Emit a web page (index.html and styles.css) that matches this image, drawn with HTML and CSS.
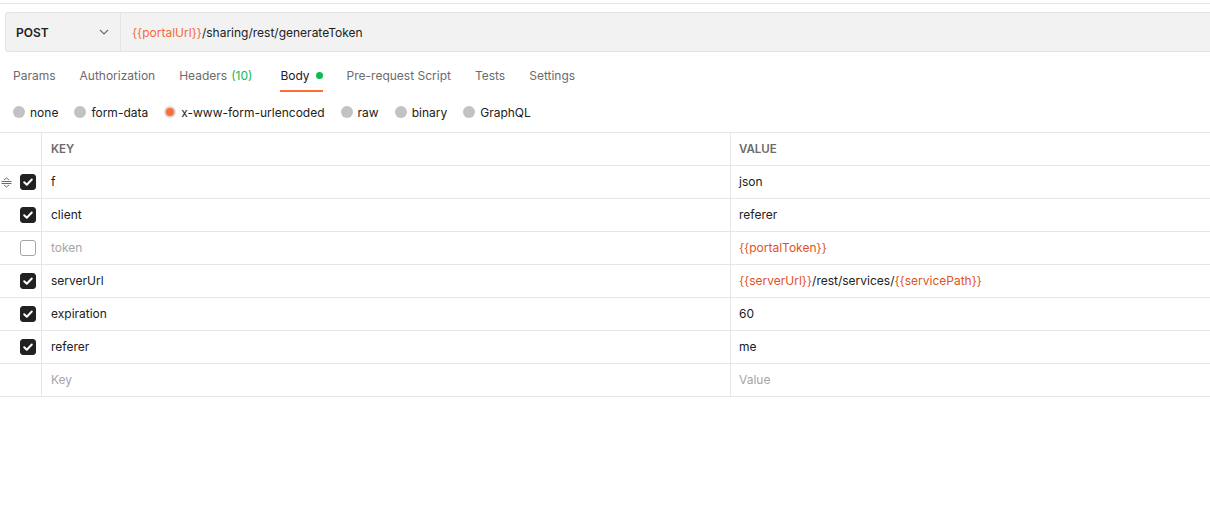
FILE: index.html
```html
<!DOCTYPE html>
<html>
<head>
<meta charset="utf-8">
<link rel="stylesheet" href="styles.css">
</head>
<body>
<div class="topline"></div>
<div class="urlbar">
  <div class="method">
    <span class="method-name">POST</span>
    <svg class="chev" width="10" height="6" viewBox="0 0 10 6"><path d="M1 1l4 4 4-4" fill="none" stroke="#6b6b6b" stroke-width="1.1"/></svg>
  </div>
  <div class="url"><span class="var-light">{{portalUrl}}</span>/sharing/rest/generateToken</div>
</div>
<div class="tabs">
  <div class="tab">Params</div>
  <div class="tab">Authorization</div>
  <div class="tab">Headers <span class="count">(10)</span></div>
  <div class="tab active">Body <span class="dot"></span></div>
  <div class="tab">Pre-request Script</div>
  <div class="tab">Tests</div>
  <div class="tab">Settings</div>
</div>
<div class="radios">
  <div class="radio"><span class="circle"></span>none</div>
  <div class="radio"><span class="circle"></span>form-data</div>
  <div class="radio"><span class="circle on"></span>x-www-form-urlencoded</div>
  <div class="radio"><span class="circle"></span>raw</div>
  <div class="radio"><span class="circle"></span>binary</div>
  <div class="radio"><span class="circle"></span>GraphQL</div>
</div>
<div class="table">
  <div class="row head">
    <div class="cell c0"></div>
    <div class="cell c1">KEY</div>
    <div class="cell c2">VALUE</div>
  </div>
  <div class="row">
    <div class="cell c0">
      <svg class="drag" width="11" height="11" viewBox="0 0 11 11"><path d="M3 3l2.5-2 2.5 2M0.5 4.5h10M0.5 6.5h10M3 8l2.5 2 2.5-2" fill="none" stroke="#6b6b6b" stroke-width="1"/></svg>
      <span class="cb checked"><svg width="16" height="16" viewBox="0 0 16 16"><path d="M4.2 8.2l2.6 2.5 5-5.2" fill="none" stroke="#fff" stroke-width="2" stroke-linecap="round" stroke-linejoin="round"/></svg></span>
    </div>
    <div class="cell c1">f</div>
    <div class="cell c2">json</div>
  </div>
  <div class="row">
    <div class="cell c0"><span class="cb checked"><svg width="16" height="16" viewBox="0 0 16 16"><path d="M4.2 8.2l2.6 2.5 5-5.2" fill="none" stroke="#fff" stroke-width="2" stroke-linecap="round" stroke-linejoin="round"/></svg></span></div>
    <div class="cell c1">client</div>
    <div class="cell c2">referer</div>
  </div>
  <div class="row">
    <div class="cell c0"><span class="cb"></span></div>
    <div class="cell c1 muted">token</div>
    <div class="cell c2"><span class="var">{{portalToken}}</span></div>
  </div>
  <div class="row">
    <div class="cell c0"><span class="cb checked"><svg width="16" height="16" viewBox="0 0 16 16"><path d="M4.2 8.2l2.6 2.5 5-5.2" fill="none" stroke="#fff" stroke-width="2" stroke-linecap="round" stroke-linejoin="round"/></svg></span></div>
    <div class="cell c1">serverUrl</div>
    <div class="cell c2"><span class="var">{{serverUrl}}</span>/rest/services/<span class="var">{{servicePath}}</span></div>
  </div>
  <div class="row">
    <div class="cell c0"><span class="cb checked"><svg width="16" height="16" viewBox="0 0 16 16"><path d="M4.2 8.2l2.6 2.5 5-5.2" fill="none" stroke="#fff" stroke-width="2" stroke-linecap="round" stroke-linejoin="round"/></svg></span></div>
    <div class="cell c1">expiration</div>
    <div class="cell c2">60</div>
  </div>
  <div class="row">
    <div class="cell c0"><span class="cb checked"><svg width="16" height="16" viewBox="0 0 16 16"><path d="M4.2 8.2l2.6 2.5 5-5.2" fill="none" stroke="#fff" stroke-width="2" stroke-linecap="round" stroke-linejoin="round"/></svg></span></div>
    <div class="cell c1">referer</div>
    <div class="cell c2">me</div>
  </div>
  <div class="row">
    <div class="cell c0"></div>
    <div class="cell c1 placeholder">Key</div>
    <div class="cell c2 placeholder">Value</div>
  </div>
</div>
</body>
</html>
```

FILE: styles.css
```css
* { box-sizing: border-box; }
body {
  margin: 0;
  background: #fff;
  font-family: Inter, "Noto Sans", sans-serif;
  font-size: 12px;
  color: #212121;
}
.topline {
  height: 4px;
  border-bottom: 1px solid #e6e6e6;
}
.urlbar {
  display: flex;
  margin: 8px 0 0 5px;
  height: 40px;
  background: #f2f2f2;
  border: 1px solid #e3e3e3;
  border-right: none;
  border-radius: 4px 0 0 4px;
}
.method {
  width: 115px;
  display: flex;
  align-items: center;
  justify-content: space-between;
  padding: 0 11px 0 10px;
  border-right: 1px solid #e3e3e3;
}
.method-name {
  font-weight: 600;
  color: #212121;
}
.url {
  display: flex;
  align-items: center;
  padding-left: 11px;
  color: #212121;
}
.var-light { color: #f26b3a; }
.var { color: #e0531f; }
.tabs {
  display: flex;
  gap: 24px;
  padding: 0 0 0 13px;
  margin-top: 8px;
  height: 32px;
}
.tab {
  display: flex;
  align-items: center;
  color: #6b6b6b;
  height: 32px;
  border-bottom: 2px solid transparent;
}
.tab.active {
  color: #212121;
  border-bottom-color: #ff6c37;
  margin-left: 4px;
}
.count {
  color: #0cbb52;
  margin-left: 4px;
}
.dot {
  display: inline-block;
  width: 7px;
  height: 7px;
  border-radius: 50%;
  background: #0cbb52;
  margin-left: 6px;
}
.radios {
  display: flex;
  gap: 16px;
  padding-left: 13px;
  height: 40px;
  align-items: center;
}
.radio {
  display: flex;
  align-items: center;
  gap: 5px;
  color: #212121;
}
.circle {
  width: 12px;
  height: 12px;
  border-radius: 50%;
  background: #c2c2c2;
}
.circle.on {
  background: #ff6c37;
  border: 2px solid #d9d9d9;
}
.table {
  border-top: 1px solid #e6e6e6;
}
.row {
  display: grid;
  grid-template-columns: 42px 689px 1fr;
  height: 33px;
  border-bottom: 1px solid #e6e6e6;
}
.cell {
  display: flex;
  align-items: center;
  padding-left: 9px;
  padding-bottom: 2px;
  border-right: 1px solid #e6e6e6;
}
.cell.c2 { padding-left: 8px; border-right: none; }
.cell.c0 {
  position: relative;
  padding-left: 20px;
  padding-bottom: 0;
}
.head .cell {
  font-weight: 600;
  color: #6b6b6b;
  font-size: 11.5px;
  padding-bottom: 0;
}
.drag {
  position: absolute;
  left: 1px;
  top: 11px;
}
.cb {
  width: 16px;
  height: 16px;
  border-radius: 3px;
  border: 1px solid #a6a6a6;
  background: #fff;
  display: flex;
}
.cb.checked {
  background: #212121;
  border-color: #212121;
}
.cb.checked svg { margin: -1px; }
.muted, .placeholder { color: #a6a6a6; }
```
